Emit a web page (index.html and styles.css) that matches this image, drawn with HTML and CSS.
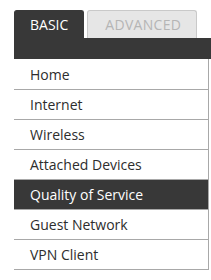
FILE: index.html
```html
<!DOCTYPE html>
<html lang="en">
<head>
    <meta charset="UTF-8">
    <title>Menu</title>
    <link rel="stylesheet" href="styles.css">
</head>
<body>

<div class="sidebar">
    <div class="tabs">
        <div class="tab active">BASIC</div>
        <div class="tab">ADVANCED</div>
    </div>
    <div class="tab-bar"></div>

    <ul class="menu">
        <li>Home</li>
        <li>Internet</li>
        <li>Wireless</li>
        <li>Attached Devices</li>
        <li class="selected">Quality of Service</li>
        <li>Guest Network</li>
        <li>VPN Client</li>
    </ul>
</div>

</body>
</html>
```

FILE: styles.css
```css
* {
    margin: 0;
    padding: 0;
    box-sizing: border-box;
    font-family: "Open Sans", Arial, sans-serif;
}

body {
    background-color: #fff;
}

.sidebar {
    padding: 10px 0 0 14px;
}

.tabs {
    display: flex;
    gap: 3px;
    height: 28px;
}

.tab {
    font-size: 14px;
    line-height: 28px;
    padding: 0 15px 0 17px;
    border-radius: 3px 3px 0 0;
    background-color: #e6e6e6;
    border: 1px solid #c9c9c9;
    border-bottom: none;
    color: #b5b5b5;
    letter-spacing: 0.3px;
}

.tab.active {
    background-color: #383838;
    border-color: #383838;
    color: #fff;
    padding: 0 15px 0 15px;
    letter-spacing: 0;
}

.tab-bar {
    height: 21px;
    background-color: #383838;
}

.menu {
    list-style: none;
    width: 195px;
    border-right: 1px solid #a8a8a8;
    padding-top: 1px;
}

.menu li {
    height: 30px;
    line-height: 29px;
    padding-left: 16px;
    font-size: 14px;
    color: #2d2d2d;
    border-bottom: 1px solid #a8a8a8;
}

.menu li.selected {
    background-color: #383838;
    color: #fff;
}
```
